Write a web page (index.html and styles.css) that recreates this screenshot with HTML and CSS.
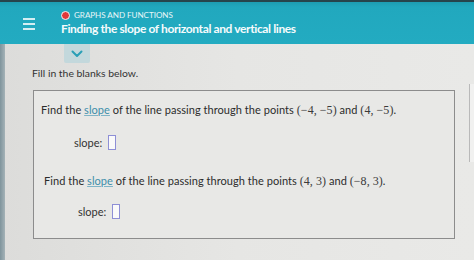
FILE: index.html
```html
<!DOCTYPE html>
<html>
<head>
<meta charset="utf-8">
<link rel="stylesheet" href="styles.css">
</head>
<body>
<div class="page">
  <header class="topbar">
    <div class="menu">
      <span></span><span></span><span></span>
    </div>
    <div class="titles">
      <div class="category"><span class="dot"></span>GRAPHS AND FUNCTIONS</div>
      <div class="title">Finding the slope of horizontal and vertical lines</div>
    </div>
  </header>
  <div class="body-row">
    <div class="leftstrip"></div>
    <main class="content">
      <div class="tab">
        <svg width="12" height="8" viewBox="0 0 12 8"><path d="M1.5 1.5 L6 6 L10.5 1.5" fill="none" stroke="#2a9fb6" stroke-width="2" stroke-linecap="round" stroke-linejoin="round"/></svg>
      </div>
      <p class="intro">Fill in the blanks below.</p>
      <section class="qbox">
        <div class="question">
          <p class="qtext">Find the <span class="link">slope</span> of the line passing through the points <span class="math">(−4, −5)</span> and <span class="math">(4, −5)</span>.</p>
          <div class="answer">slope: <span class="input"></span></div>
        </div>
        <div class="question q2">
          <p class="qtext">Find the <span class="link">slope</span> of the line passing through the points <span class="math">(4, 3)</span> and <span class="math">(−8, 3)</span>.</p>
          <div class="answer">slope: <span class="input"></span></div>
        </div>
      </section>
    </main>
    <div class="rightedge"></div>
  </div>
</div>
</body>
</html>
```

FILE: styles.css
```css
html, body {
  margin: 0;
  padding: 0;
}
body {
  width: 474px;
  height: 260px;
  overflow: hidden;
  background: #e3e3e1;
  font-family: "Lato", "Open Sans", sans-serif;
  color: #2e2e2e;
}
.page {
  width: 474px;
  height: 260px;
  display: flex;
  flex-direction: column;
  background: linear-gradient(90deg, #dcdcda 0%, #e6e6e4 50%, #e9e9e7 100%);
}
.topbar {
  height: 44px;
  flex: none;
  display: flex;
  align-items: center;
  background: linear-gradient(180deg, #1d9db2 0%, #21a8be 12%, #23abc1 100%);
  border-top: 2px solid #26444c;
  box-sizing: border-box;
  color: #fff;
}
.menu {
  width: 12px;
  margin-left: 23px;
  display: flex;
  flex-direction: column;
  gap: 3.4px;
  margin-top: 2px;
}
.menu span {
  display: block;
  height: 1.6px;
  background: #d4eef2;
}
.titles {
  margin-left: 26px;
  display: flex;
  flex-direction: column;
  margin-top: 1px;
}
.category {
  display: flex;
  align-items: center;
  font-size: 8.1px;
  letter-spacing: -0.05px;
  color: #e8f6f8;
  line-height: 11px;
}
.dot {
  width: 7px;
  height: 7px;
  border-radius: 50%;
  background: #e0383a;
  border: 1px solid #f4f4f4;
  margin-right: 4px;
}
.title {
  font-size: 12px;
  font-weight: 700;
  letter-spacing: -0.38px;
  line-height: 16px;
  color: #f6fbfc;
}
.body-row {
  flex: 1;
  display: flex;
}
.leftstrip {
  width: 5px;
  flex: none;
  background: linear-gradient(90deg, #7f949c, #a4b2b7);
}
.content {
  flex: 1;
  display: flex;
  flex-direction: column;
  padding-left: 28px;
}
.tab {
  width: 26px;
  height: 19px;
  margin-left: 31px;
  background: #c3d8dc;
  border-radius: 0 0 2px 2px;
  display: flex;
  align-items: center;
  justify-content: center;
}
.intro {
  margin: 3px 0 0 -1px;
  font-size: 10.4px;
  line-height: 14px;
  color: #333;
}
.qbox {
  margin-top: 10px;
  width: 422px;
  height: 149px;
  box-sizing: border-box;
  border: 1px solid #8c8c8c;
  background: #e8e8e6;
  padding: 11px 0 0 7px;
}
.qtext {
  margin: 0;
  font-size: 11px;
  letter-spacing: 0.05px;
  line-height: 15px;
  color: #2c2c2c;
}
.link {
  color: #3d8eaa;
  text-decoration: underline;
  text-decoration-color: #7fb4c6;
}
.math {
  font-family: "Liberation Serif", serif;
  font-size: 12px;
  color: #3a3a3a;
}
.answer {
  margin: 17px 0 0 33px;
  display: flex;
  align-items: center;
  font-size: 11px;
  color: #333;
}
.input {
  display: inline-block;
  width: 6px;
  height: 13px;
  border: 1px solid #8e8fd6;
  background: #fafafa;
  margin-left: 6px;
}
.q2 {
  margin-top: 23px;
}
.q2 .qtext {
  margin-left: 3px;
}
.q2 .answer {
  margin-top: 15px;
  margin-left: 37px;
}
.rightedge {
  width: 4px;
  flex: none;
  margin-top: 40px;
  height: 78px;
  border-left: 1px solid #b9b9b9;
  background: #f1f1f0;
}
```
